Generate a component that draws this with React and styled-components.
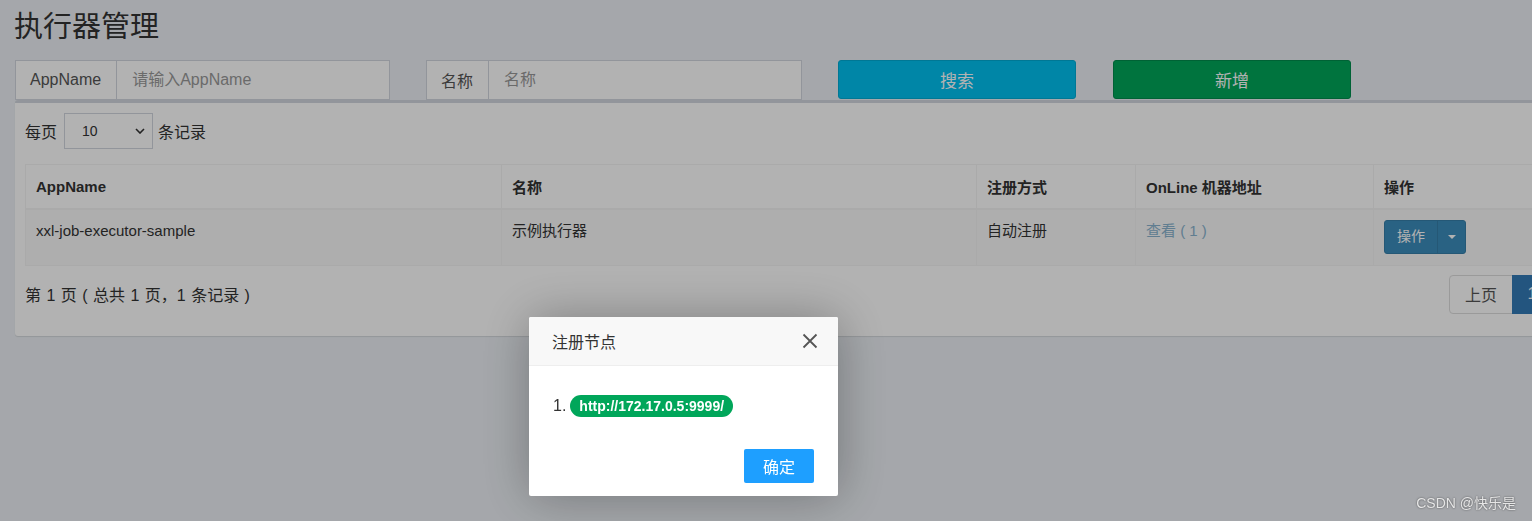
import React from 'react';
import styled, { createGlobalStyle } from 'styled-components';

const GlobalStyle = createGlobalStyle`
  html, body {
    margin: 0;
    padding: 0;
  }
  body {
    width: 1532px;
    height: 521px;
    overflow: hidden;
    background: #ecf0f5;
    color: #333;
    font-family: "Liberation Sans", "Noto Sans CJK SC", sans-serif;
  }
  * {
    box-sizing: border-box;
  }
`;

const Page = styled.div`
  width: 1640px;
  padding: 10px 15px 0;
`;

const Title = styled.h1`
  margin: 0 0 16px -1px;
  font-size: 29px;
  font-weight: normal;
  line-height: 34px;
  color: #333;
`;

const SearchRow = styled.div`
  display: flex;
  gap: 36px;
  height: 40px;
`;

const InputGroup = styled.div`
  display: flex;
  width: ${(p) => p.w}px;
  height: 40px;
  border: 1px solid #d2d6de;
  background: #fff;
`;

const Addon = styled.span`
  display: flex;
  align-items: center;
  padding: 0 15px 0 14px;
  border-right: 1px solid #d2d6de;
  font-size: 16px;
  color: #555;
`;

const Input = styled.input`
  flex: 1;
  min-width: 0;
  border: none;
  outline: none;
  padding: 0 15px;
  font: 16px "Liberation Sans", "Noto Sans CJK SC", sans-serif;
  color: #555;
  background: transparent;
  &::placeholder {
    color: #999;
  }
`;

const Btn = styled.button`
  width: 238px;
  height: 39px;
  margin-left: ${(p) => p.ml || 0}px;
  border-radius: 3px;
  border: 1px solid ${(p) => p.bd};
  background: ${(p) => p.bg};
  color: #fff;
  font: 17px "Liberation Sans", "Noto Sans CJK SC", sans-serif;
`;

const Box = styled.div`
  width: 1610px;
  background: #fff;
  border-top: 3px solid #d2d6de;
  border-radius: 3px;
  box-shadow: 0 1px 1px rgba(0, 0, 0, 0.1);
  padding: 10px 10px 22px;
`;

const LengthRow = styled.div`
  display: flex;
  align-items: center;
  height: 36px;
  font-size: 16px;
  color: #333;
`;

const Select = styled.div`
  display: flex;
  align-items: center;
  justify-content: space-between;
  width: 89px;
  height: 36px;
  margin: 0 5px 0 7px;
  padding: 0 7px 0 17px;
  border: 1px solid #d2d6de;
  font-size: 14px;
`;

const Table = styled.table`
  width: 100%;
  margin-top: 15px;
  border-collapse: collapse;
  table-layout: fixed;
  border: 1px solid #f4f4f4;
`;

const Th = styled.th`
  height: 44px;
  padding: 0 10px;
  text-align: left;
  font-size: 15px;
  font-weight: bold;
  color: #333;
  border: 1px solid #f4f4f4;
  border-bottom-width: 2px;
`;

const Td = styled.td`
  padding: 10px 10px 11px;
  vertical-align: top;
  font-size: 15px;
  line-height: 21px;
  color: #333;
  background: #f9f9f9;
  border: 1px solid #f4f4f4;
`;

const Link = styled.span`
  color: #8ab4cf;
`;

const SplitBtn = styled.div`
  display: inline-flex;
  height: 34px;
  border: 1px solid #367fa9;
  border-radius: 3px;
  background: #3c8dbc;
  color: #fff;
  font-size: 14px;
`;

const SplitMain = styled.span`
  display: flex;
  align-items: center;
  width: 53px;
  justify-content: center;
  border-right: 1px solid #367fa9;
`;

const SplitCaret = styled.span`
  display: flex;
  align-items: center;
  justify-content: center;
  width: 27px;
  &::after {
    content: '';
    border-top: 4px solid #fff;
    border-left: 4px solid transparent;
    border-right: 4px solid transparent;
  }
`;

const Footer = styled.div`
  display: flex;
  justify-content: space-between;
  align-items: center;
  margin-top: 9px;
`;

const Info = styled.div`
  font-size: 16px;
  word-spacing: 1px;
  color: #333;
`;

const Pager = styled.div`
  display: flex;
`;

const PageItem = styled.span`
  display: flex;
  align-items: center;
  justify-content: center;
  height: 39px;
  width: ${(p) => p.w}px;
  margin-left: -1px;
  border: 1px solid ${(p) => (p.active ? '#337ab7' : '#ddd')};
  background: ${(p) => (p.active ? '#337ab7' : '#fff')};
  color: ${(p) => (p.active ? '#fff' : '#555')};
  font-size: 16px;
  &:first-child {
    border-radius: 4px 0 0 4px;
  }
  &:last-child {
    border-radius: 0 4px 4px 0;
  }
`;

const Shade = styled.div`
  position: fixed;
  inset: 0;
  background: rgba(0, 0, 0, 0.3);
  z-index: 10;
`;

const Dialog = styled.div`
  position: fixed;
  left: 529px;
  top: 317px;
  width: 309px;
  background: #fff;
  border-radius: 2px;
  box-shadow: 1px 1px 50px rgba(0, 0, 0, 0.3);
  z-index: 20;
`;

const DialogHead = styled.div`
  display: flex;
  align-items: center;
  justify-content: space-between;
  height: 49px;
  padding: 0 20px 0 23px;
  background: #f8f8f8;
  border-bottom: 1px solid #eee;
  border-radius: 2px 2px 0 0;
  font-size: 16px;
  color: #333;
`;

const DialogBody = styled.div`
  display: flex;
  align-items: center;
  padding: 29px 24px 0;
  height: 22px;
  box-sizing: content-box;
  font-size: 16px;
  color: #333;
`;

const Badge = styled.span`
  display: inline-flex;
  align-items: center;
  height: 22px;
  margin-left: 4px;
  padding: 0 9px;
  border-radius: 11px;
  background: #00a65a;
  color: #fff;
  font-size: 14px;
  font-weight: bold;
`;

const DialogFoot = styled.div`
  display: flex;
  justify-content: flex-end;
  padding: 32px 24px 13px;
`;

const OkBtn = styled.button`
  height: 34px;
  padding: 0 19px;
  border: none;
  border-radius: 2px;
  background: #1e9fff;
  color: #fff;
  font: 16px "Liberation Sans", "Noto Sans CJK SC", sans-serif;
`;

const Watermark = styled.div`
  position: fixed;
  right: 16px;
  bottom: 9px;
  z-index: 30;
  font-size: 14px;
  color: #e6e6e6;
  text-shadow: 0 0 2px rgba(0, 0, 0, 0.6);
`;

export default function App() {
  return (
    <>
      <GlobalStyle />
      <Page>
        <Title>执行器管理</Title>
        <SearchRow>
          <InputGroup w={375}>
            <Addon>AppName</Addon>
            <Input placeholder='请输入AppName' />
          </InputGroup>
          <InputGroup w={376}>
            <Addon>名称</Addon>
            <Input placeholder='名称' />
          </InputGroup>
          <Btn bg='#00c0ef' bd='#00acd6'>搜索</Btn>
          <Btn bg='#00a65a' bd='#008d4c' ml={1}>新增</Btn>
        </SearchRow>
        <Box>
          <LengthRow>
            每页
            <Select>
              10
              <svg width='10' height='6' viewBox='0 0 10 6'>
                <polyline points='1,1 5,5 9,1' fill='none' stroke='#333' strokeWidth='1.6' />
              </svg>
            </Select>
            条记录
          </LengthRow>
          <Table>
            <colgroup>
              <col style={{ width: 476 }} />
              <col style={{ width: 475 }} />
              <col style={{ width: 159 }} />
              <col style={{ width: 238 }} />
              <col />
            </colgroup>
            <thead>
              <tr>
                <Th>AppName</Th>
                <Th>名称</Th>
                <Th>注册方式</Th>
                <Th>OnLine 机器地址</Th>
                <Th>操作</Th>
              </tr>
            </thead>
            <tbody>
              <tr>
                <Td>xxl-job-executor-sample</Td>
                <Td>示例执行器</Td>
                <Td>自动注册</Td>
                <Td>
                  <Link>查看 ( 1 )</Link>
                </Td>
                <Td>
                  <SplitBtn>
                    <SplitMain>操作</SplitMain>
                    <SplitCaret />
                  </SplitBtn>
                </Td>
              </tr>
            </tbody>
          </Table>
          <Footer>
            <Info>第 1 页 ( 总共 1 页，1 条记录 )</Info>
            <Pager>
              <PageItem w={64}>上页</PageItem>
              <PageItem w={40} active>1</PageItem>
              <PageItem w={64}>下页</PageItem>
            </Pager>
          </Footer>
        </Box>
      </Page>
      <Shade />
      <Dialog>
        <DialogHead>
          注册节点
          <svg width='16' height='16' viewBox='0 0 16 16'>
            <path d='M1.5 1.5 L14.5 14.5 M14.5 1.5 L1.5 14.5' stroke='#555' strokeWidth='1.8' />
          </svg>
        </DialogHead>
        <DialogBody>
          1.
          <Badge>http://172.17.0.5:9999/</Badge>
        </DialogBody>
        <DialogFoot>
          <OkBtn>确定</OkBtn>
        </DialogFoot>
      </Dialog>
      <Watermark>CSDN @快乐是</Watermark>
    </>
  );
}
